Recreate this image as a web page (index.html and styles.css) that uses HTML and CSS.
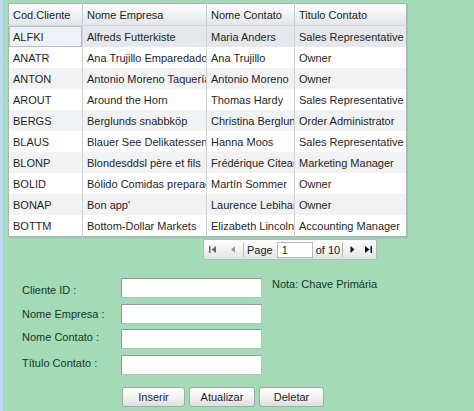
FILE: index.html
```html
<!DOCTYPE html>
<html>
<head>
<meta charset="utf-8">
<link rel="stylesheet" href="styles.css">
</head>
<body>
<div class="page">
  <table class="grid">
    <colgroup>
      <col class="c1"><col class="c2"><col class="c3"><col class="c4">
    </colgroup>
    <thead>
      <tr><th>Cod.Cliente</th><th>Nome Empresa</th><th>Nome Contato</th><th>Titulo Contato</th></tr>
    </thead>
    <tbody>
      <tr class="sel"><td class="cur"><div>ALFKI</div></td><td><div>Alfreds Futterkiste</div></td><td><div>Maria Anders</div></td><td><div>Sales Representative</div></td></tr>
      <tr><td><div>ANATR</div></td><td><div>Ana Trujillo Emparedados y helados</div></td><td><div>Ana Trujillo</div></td><td><div>Owner</div></td></tr>
      <tr class="alt"><td><div>ANTON</div></td><td><div>Antonio Moreno Taquería</div></td><td><div>Antonio Moreno</div></td><td><div>Owner</div></td></tr>
      <tr><td><div>AROUT</div></td><td><div>Around the Horn</div></td><td><div>Thomas Hardy</div></td><td><div>Sales Representative</div></td></tr>
      <tr class="alt"><td><div>BERGS</div></td><td><div>Berglunds snabbköp</div></td><td><div>Christina Berglund</div></td><td><div>Order Administrator</div></td></tr>
      <tr><td><div>BLAUS</div></td><td><div>Blauer See Delikatessen</div></td><td><div>Hanna Moos</div></td><td><div>Sales Representative</div></td></tr>
      <tr class="alt"><td><div>BLONP</div></td><td><div>Blondesddsl père et fils</div></td><td><div>Frédérique Citeaux</div></td><td><div>Marketing Manager</div></td></tr>
      <tr><td><div>BOLID</div></td><td><div>Bólido Comidas preparadas</div></td><td><div>Martín Sommer</div></td><td><div>Owner</div></td></tr>
      <tr class="alt"><td><div>BONAP</div></td><td><div>Bon app'</div></td><td><div>Laurence Lebihan</div></td><td><div>Owner</div></td></tr>
      <tr><td><div>BOTTM</div></td><td><div>Bottom-Dollar Markets</div></td><td><div>Elizabeth Lincoln</div></td><td><div>Accounting Manager</div></td></tr>
    </tbody>
  </table>

  <div class="pager">
    <span class="pbtn pfirst">
      <svg width="9" height="9" viewBox="0 0 9 9"><rect x="1" y="1" width="1.5" height="7" fill="#666"/><path d="M8 1 L3.5 4.5 L8 8 Z" fill="#666"/></svg>
    </span>
    <span class="pbtn pprev">
      <svg width="7" height="9" viewBox="0 0 7 9"><path d="M6 1 L2 4.5 L6 8 Z" fill="#999"/></svg>
    </span>
    <span class="psep psep1"></span>
    <span class="ptext">Page</span>
    <span class="pinput">1</span>
    <span class="ptext">of 10</span>
    <span class="psep psep2"></span>
    <span class="pbtn pnext">
      <svg width="7" height="9" viewBox="0 0 7 9"><path d="M1.5 1 L5.5 4.5 L1.5 8 Z" fill="#111"/></svg>
    </span>
    <span class="pbtn plast">
      <svg width="9" height="9" viewBox="0 0 9 9"><path d="M1 1 L5.5 4.5 L1 8 Z" fill="#111"/><rect x="6.5" y="1" width="1.5" height="7" fill="#111"/></svg>
    </span>
  </div>

  <div class="form">
    <label class="lbl l1">Cliente ID :</label>
    <span class="inp"></span>
    <span class="nota">Nota: Chave Primária</span>
    <label class="lbl l2">Nome Empresa :</label>
    <span class="inp"></span>
    <span></span>
    <label class="lbl l3">Nome Contato :</label>
    <span class="inp"></span>
    <span></span>
    <label class="lbl l4">Título Contato :</label>
    <span class="inp"></span>
    <span></span>
  </div>

  <div class="buttons">
    <span class="btn">Inserir</span>
    <span class="btn">Atualizar</span>
    <span class="btn">Deletar</span>
  </div>
</div>
</body>
</html>
```

FILE: styles.css
```css
html, body {
  margin: 0;
  padding: 0;
}
body {
  background: #a2dbb6;
  font-family: "Liberation Sans", Arial, sans-serif;
  font-size: 11px;
  color: #1f1f1f;
}
.page {
  border-left: 3px solid #bcd9ef;
  padding: 3px 0 0 5px;
  box-sizing: border-box;
  height: 411px;
  overflow: hidden;
}
.grid {
  border-collapse: collapse;
  table-layout: fixed;
  width: 398px;
  background: #fff;
  border: 1px solid #a9b3b8;
  box-shadow: 1px 1px 1px rgba(0,0,0,0.08);
}
.c1 { width: 74px; }
.c2 { width: 124px; }
.c3 { width: 88px; }
.c4 { width: 112px; }
.grid th {
  height: 21px;
  padding: 0 0 0 4px;
  text-align: left;
  font-weight: normal;
  color: #222;
  background: linear-gradient(#ffffff, #eceef0 60%, #e2e5e8);
  border-right: 1px solid #c9cdd1;
  border-bottom: 1px solid #d3d6d9;
  white-space: nowrap;
  overflow: hidden;
}
.grid td {
  height: 21px;
  padding: 0;
  border-right: 1px solid #d0d3d6;
  white-space: nowrap;
  overflow: hidden;
}
.grid td div {
  overflow: hidden;
  padding-left: 4px;
  white-space: nowrap;
}
.grid th:last-child, .grid td:last-child {
  border-right: none;
}
.grid tr.alt td {
  background: #f1f2f3;
}
.grid tr.sel td {
  background: #e4e8ec;
}
.grid tr.sel td.cur {
  background: #eef2f6;
  box-shadow: inset 0 0 0 1px #a9c3d6;
}
.pager {
  display: flex;
  align-items: center;
  width: 174px;
  height: 21px;
  box-sizing: border-box;
  margin: 2px 0 0 195px;
  padding: 0 3px 0 1px;
  border: 1px solid #b3bab5;
  border-radius: 2px;
  background: linear-gradient(#ffffff, #f2f2f2 50%, #e3e4e4);
  white-space: nowrap;
}
.pager > * {
  flex-shrink: 0;
}
.pbtn {
  display: flex;
  align-items: center;
  justify-content: center;
  width: 14px;
  height: 16px;
}
.pprev { margin-left: 6px; }
.pnext { margin-left: 2px; }
.plast { margin-left: 2px; }
.psep {
  width: 1px;
  height: 15px;
  background: #b8bcbc;
}
.psep1 { margin: 0 3px 0 4px; }
.psep2 { margin: 0 0 0 2px; }
.ptext {
  color: #222;
}
.pinput {
  display: block;
  width: 36px;
  height: 16px;
  box-sizing: border-box;
  border: 1px solid #b5bbbd;
  background: #fff;
  padding-left: 4px;
  line-height: 14px;
  margin: 0 3px 0 4px;
}
.form {
  display: grid;
  grid-template-columns: 99px 141px auto;
  grid-auto-rows: 20px;
  row-gap: 5.5px;
  margin: 18px 0 0 14px;
}
.lbl {
  display: flex;
  align-items: center;
  color: #1c3325;
}
.l1 { padding-top: 4px; }
.l3 { padding-bottom: 4px; }
.l4 { padding-bottom: 3px; }
.inp {
  display: block;
  box-sizing: border-box;
  border: 1px solid #8f9c94;
  border-right-color: #b4c2b9;
  border-bottom-color: #b4c2b9;
  background: #fff;
}
.nota {
  color: #1c3325;
  margin-left: 10px;
}
.buttons {
  display: flex;
  gap: 4px;
  margin: 12px 0 0 114px;
}
.btn {
  display: flex;
  align-items: center;
  justify-content: center;
  width: 63px;
  height: 20px;
  box-sizing: border-box;
  border: 1px solid #a4aaa6;
  border-radius: 3px;
  background: linear-gradient(#ffffff, #f3f3f3 50%, #dcdddd);
  color: #1d1d1d;
}
.btn:nth-child(2) { width: 66px; }
.btn:nth-child(3) { width: 65px; }
```
